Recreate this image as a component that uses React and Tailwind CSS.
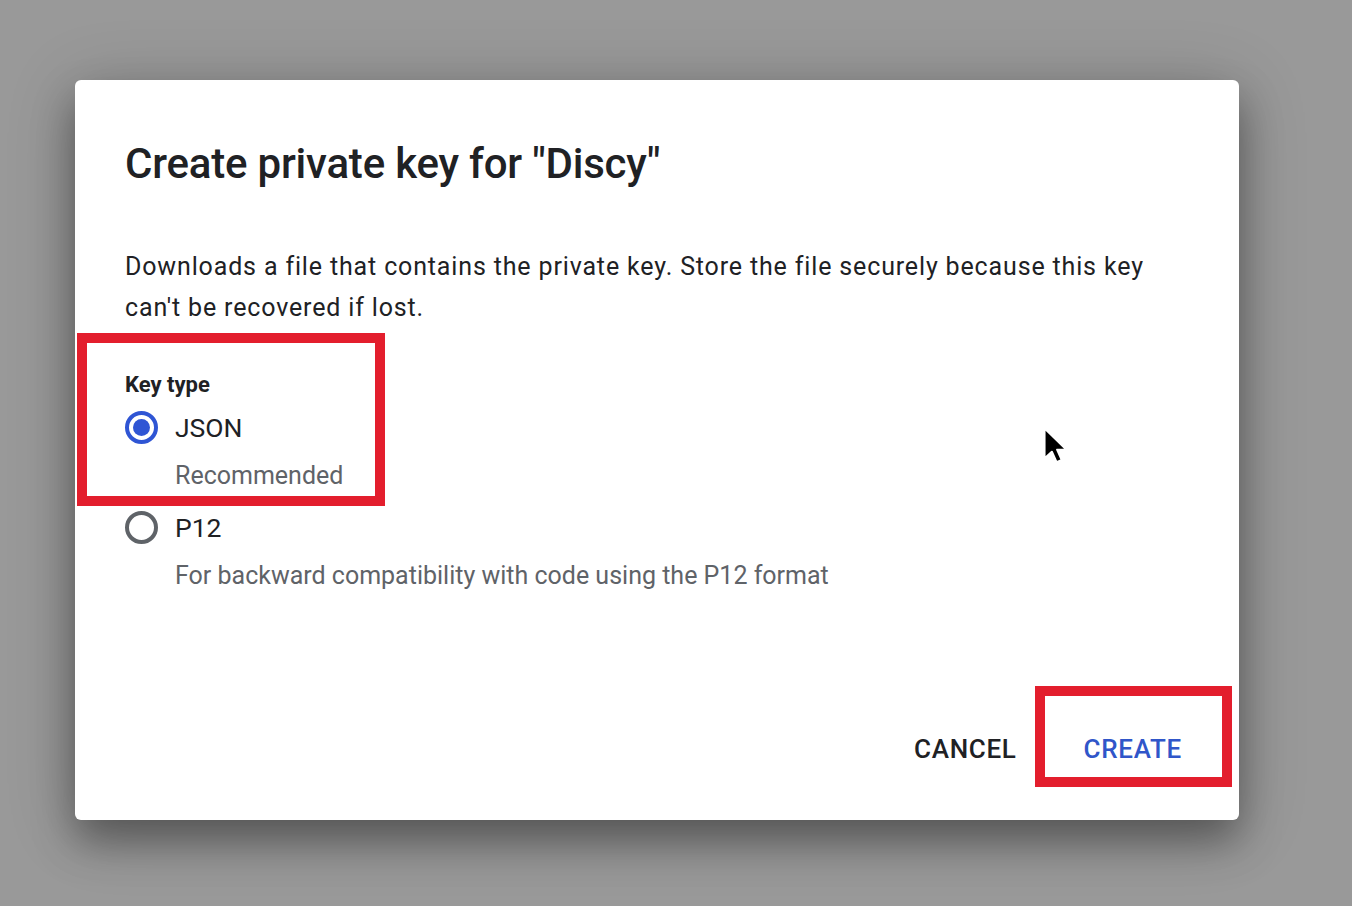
import React from "react";

function Radio({ checked }) {
  return checked ? (
    <div className="w-[33px] h-[33px] rounded-full border-[4px] border-[#2f55d4] flex items-center justify-center shrink-0">
      <div className="w-[17px] h-[17px] rounded-full bg-[#2f55d4]" />
    </div>
  ) : (
    <div className="w-[33px] h-[33px] rounded-full border-[4px] border-[#5f6368] shrink-0" />
  );
}

export default function App() {
  return (
    <div className="w-[1352px] h-[906px] bg-[#999999] overflow-hidden pt-[80px] pl-[75px]" style={{ fontFamily: "Roboto, 'Liberation Sans', sans-serif" }}>
      <div className="relative w-[1164px] h-[740px] bg-white rounded-[6px] shadow-[0_22px_40px_rgba(0,0,0,0.35),0_8px_70px_rgba(0,0,0,0.2)] flex flex-col pl-[50px] pt-[60px] pb-[55px] pr-[57px]">
        <h1 className="text-[42px] leading-[48px] font-medium text-[#202124] tracking-[-0.2px]">
          Create private key for "Discy"
        </h1>
        <p className="mt-[58px] text-[25px] leading-[41px] tracking-[0.85px] text-[#202124] whitespace-nowrap">
          Downloads a file that contains the private key. Store the file securely because this key
          <br />
          can't be recovered if lost.
        </p>
        <div className="mt-[43px] text-[22px] leading-[28px] font-bold text-[#202124]">Key type</div>
        <div className="mt-[12px] flex items-center gap-[17px]">
          <Radio checked />
          <span className="text-[26.5px] leading-[32px] text-[#202124]">JSON</span>
        </div>
        <div className="mt-[18px] ml-[50px] text-[25px] leading-[28px] text-[#5f6368]">Recommended</div>
        <div className="mt-[21px] flex items-center gap-[17px]">
          <Radio />
          <span className="text-[26.5px] leading-[32px] text-[#202124]">P12</span>
        </div>
        <div className="mt-[18px] ml-[50px] text-[25px] leading-[28px] text-[#5f6368]">
          For backward compatibility with code using the P12 format
        </div>
        <div className="mt-auto flex justify-end items-center gap-[67px]">
          <span className="text-[26px] leading-[32px] font-medium text-[#202124] tracking-[0.7px]">CANCEL</span>
          <span className="text-[26px] leading-[32px] font-medium text-[#3056c9] tracking-[0.7px]">CREATE</span>
        </div>

        <div className="absolute left-[2px] top-[253px] w-[308px] h-[173px] border-[10px] border-[#e31e2d]" />
        <div className="absolute left-[960px] top-[606px] w-[197px] h-[101px] border-[10px] border-[#e31e2d]" />

        <svg className="absolute left-[965px] top-[345px]" width="30" height="42" viewBox="0 0 28 40">
          <path d="M4 3 L4 32 L11 25.5 L15.5 35.5 L20.5 33.3 L16 23.5 L25 23.5 Z" fill="#000" stroke="#fff" strokeWidth="2" strokeLinejoin="round" />
        </svg>
      </div>
    </div>
  );
}
